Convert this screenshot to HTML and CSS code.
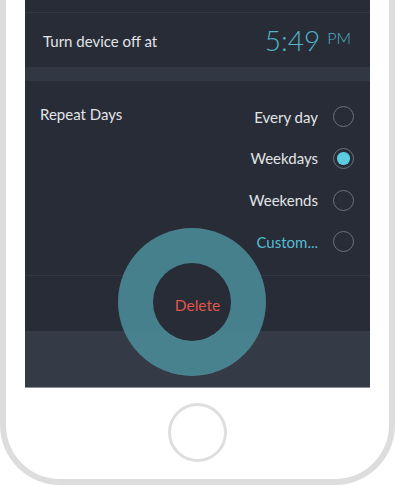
FILE: index.html
```html
<!DOCTYPE html>
<html>
<head>
<meta charset="utf-8">
<link rel="stylesheet" href="styles.css">
</head>
<body>
<div class="phone">
  <div class="screen">
    <div class="top-strip"></div>
    <div class="time-row">
      <span class="label">Turn device off at</span>
      <span class="time"><span class="clock">5:49</span><span class="ampm">PM</span></span>
    </div>
    <div class="band"></div>
    <div class="repeat">
      <div class="repeat-title">Repeat Days</div>
      <div class="options">
        <div class="option"><span class="opt-label">Every day</span><span class="radio"></span></div>
        <div class="option"><span class="opt-label">Weekdays</span><span class="radio checked"></span></div>
        <div class="option"><span class="opt-label">Weekends</span><span class="radio"></span></div>
        <div class="option"><span class="opt-label custom">Custom...</span><span class="radio"></span></div>
      </div>
    </div>
    <div class="delete-row"><span class="delete">Delete</span></div>
    <div class="lower"></div>
    <div class="touch"></div>
  </div>
  <div class="home-area"><div class="home"></div></div>
</div>
</body>
</html>
```

FILE: styles.css
```css
html, body {
  margin: 0;
  padding: 0;
  background: #ffffff;
}
body {
  width: 395px;
  height: 485px;
  overflow: hidden;
  font-family: "Lato", "Noto Sans", sans-serif;
}
.phone {
  box-sizing: border-box;
  width: 395px;
  height: 485px;
  border: 6px solid #dddddd;
  border-top: none;
  border-radius: 0 0 60px 60px;
  background: #ffffff;
  padding: 0 19px;
  display: flex;
  flex-direction: column;
}
.screen {
  position: relative;
  width: 345px;
  height: 388px;
  background: #272c37;
  display: flex;
  flex-direction: column;
  overflow: hidden;
  border-bottom: 1px solid #8b9199;
  box-sizing: border-box;
}
.top-strip {
  height: 12px;
  border-bottom: 1px solid #313743;
}
.time-row {
  height: 54px;
  display: flex;
  align-items: center;
  justify-content: space-between;
  padding: 0 19px 0 18px;
}
.label {
  color: #e2e4e7;
  font-size: 15px;
  padding-top: 1px;
}
.time {
  display: flex;
  align-items: flex-start;
  color: #52b4c8;
}
.clock {
  font-size: 28px;
  font-weight: 300;
  line-height: 32px;
}
.ampm {
  font-size: 16px;
  font-weight: 300;
  line-height: 16px;
  margin-left: 7px;
  margin-top: 6px;
}
.band {
  height: 14px;
  background: #323843;
}
.repeat {
  height: 195px;
  box-sizing: border-box;
  border-bottom: 1px solid #313743;
  display: flex;
  justify-content: space-between;
  padding: 15px 16px 0 15px;
}
.repeat-title {
  color: #e2e4e7;
  font-size: 15px;
  line-height: 20px;
  margin-top: 8px;
}
.options {
  display: flex;
  flex-direction: column;
  align-items: flex-end;
}
.option {
  height: 41.67px;
  display: flex;
  align-items: center;
  gap: 15px;
}
.opt-label {
  color: #e2e4e7;
  font-size: 15px;
}
.opt-label.custom {
  color: #55bcd2;
}
.radio {
  box-sizing: border-box;
  width: 21px;
  height: 21px;
  border: 1.5px solid #6b7380;
  border-radius: 50%;
  display: flex;
  align-items: center;
  justify-content: center;
}
.radio.checked::after {
  content: "";
  width: 12.5px;
  height: 12.5px;
  border-radius: 50%;
  background: #5ccbe0;
}
.delete-row {
  height: 55px;
  display: flex;
  align-items: center;
  justify-content: center;
}
.delete {
  position: relative;
  z-index: 2;
  color: #e0564b;
  font-size: 15.5px;
  padding-top: 2px;
}
.lower {
  flex: 1;
  background: #343a46;
}
.touch {
  position: absolute;
  left: 93px;
  top: 228px;
  width: 78px;
  height: 78px;
  border: 35.5px solid rgba(78, 146, 160, 0.82);
  border-radius: 50%;
  background: #272c37;
  background-clip: padding-box;
  z-index: 1;
}
.home-area {
  flex: 1;
  display: flex;
  align-items: center;
  justify-content: center;
  padding-bottom: 3px;
}
.home {
  box-sizing: border-box;
  width: 59px;
  height: 59px;
  border: 3px solid #dedede;
  border-radius: 50%;
}
```
